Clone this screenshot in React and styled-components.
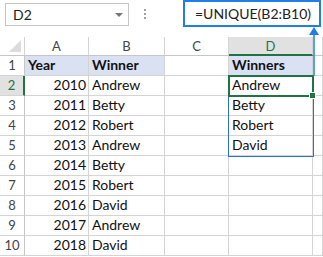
import React from 'react'
import styled, { createGlobalStyle } from 'styled-components'

const GlobalStyle = createGlobalStyle`
  html, body {
    margin: 0;
    padding: 0;
    background: #ffffff;
  }
  body {
    font-family: Lato, 'Open Sans', sans-serif;
  }
`

const Sheet = styled.div`
  position: relative;
  width: 323px;
  height: 257px;
  overflow: hidden;
  background: #ffffff;
`

const TopBar = styled.div`
  display: flex;
  align-items: flex-start;
  height: 27px;
  margin-bottom: 10px;
`

const NameBox = styled.div`
  display: flex;
  align-items: center;
  justify-content: space-between;
  box-sizing: border-box;
  width: 124px;
  height: 23px;
  margin: 3px 0 0 5px;
  padding: 0 5px 0 7px;
  border: 1px solid #c6c6c6;
  font-size: 14px;
  color: #222;
`

const Caret = styled.span`
  width: 0;
  height: 0;
  border-left: 4px solid transparent;
  border-right: 4px solid transparent;
  border-top: 4px solid #777;
`

const Dots = styled.div`
  display: flex;
  flex-direction: column;
  align-items: center;
  gap: 2px;
  width: 32px;
  margin: 9px 0 0 0;
  padding-left: 0;
  & > span {
    width: 2px;
    height: 2px;
    background: #a0a0a0;
  }
`

const FormulaBox = styled.div`
  box-sizing: border-box;
  margin-left: 22px;
  width: 138px;
  height: 27px;
  border: 2px solid #1f7fe6;
  padding-left: 10px;
  display: flex;
  align-items: center;
  font-size: 14px;
  color: #222;
`

const Grid = styled.div`
  display: grid;
  grid-template-columns: 25px 64px 76px 64px 84px 10px;
  grid-template-rows: 19px repeat(10, 20px);
  font-size: 14px;
`

const Corner = styled.div`
  position: relative;
  background: #ffffff;
  border-right: 1px solid #d4d4d4;
  border-bottom: 1px solid #c6c6c6;
  &::after {
    content: '';
    position: absolute;
    right: 3px;
    bottom: 3px;
    width: 0;
    height: 0;
    border-left: 12px solid transparent;
    border-bottom: 12px solid #dcdcdc;
  }
`

const ColHead = styled.div`
  display: flex;
  align-items: center;
  justify-content: center;
  box-sizing: border-box;
  font-size: 13px;
  color: ${p => (p.active ? '#217346' : '#444')};
  background: ${p => (p.active ? '#e1e1e1' : '#ffffff')};
  border-right: 1px solid #d4d4d4;
  border-bottom: ${p => (p.active ? '2px solid #217346' : '1px solid #c6c6c6')};
`

const RowHead = styled.div`
  display: flex;
  align-items: flex-end;
  justify-content: center;
  box-sizing: border-box;
  padding-bottom: 2px;
  font-size: 13px;
  color: ${p => (p.active ? '#217346' : '#444')};
  background: ${p => (p.active ? '#e1e1e1' : '#ffffff')};
  border-right: ${p => (p.active ? '2px solid #217346' : '1px solid #c6c6c6')};
  border-bottom: 1px solid #d4d4d4;
`

const Cell = styled.div`
  display: flex;
  align-items: flex-end;
  justify-content: ${p => (p.num ? 'flex-end' : 'flex-start')};
  box-sizing: border-box;
  padding: 0 2px 2px 3px;
  color: #111;
  font-weight: ${p => (p.bold ? 700 : 400)};
  background: ${p => (p.head ? '#d9e1f2' : '#ffffff')};
  border-right: 1px solid #d4d4d4;
  border-bottom: 1px solid #d4d4d4;
  white-space: nowrap;
  overflow: hidden;
`

const SpillRange = styled.div`
  position: absolute;
  left: 228px;
  top: 75px;
  width: 86px;
  height: 82px;
  box-sizing: border-box;
  border: 1px solid #2a6fd4;
  pointer-events: none;
`

const Selection = styled.div`
  position: absolute;
  left: 228px;
  top: 75px;
  width: 86px;
  height: 22px;
  box-sizing: border-box;
  border: 2px solid #217346;
  &::after {
    content: '';
    position: absolute;
    right: -4px;
    bottom: -4px;
    width: 5px;
    height: 5px;
    background: #217346;
    border: 1px solid #fff;
  }
`

const Arrow = styled.svg`
  position: absolute;
  left: 308px;
  top: 26px;
`

const data = [
  [2010, 'Andrew', 'Andrew'],
  [2011, 'Betty', 'Betty'],
  [2012, 'Robert', 'Robert'],
  [2013, 'Andrew', 'David'],
  [2014, 'Betty', ''],
  [2015, 'Robert', ''],
  [2016, 'David', ''],
  [2017, 'Andrew', ''],
  [2018, 'David', ''],
]

const App = () => {
  return (
    <>
      <GlobalStyle />
      <Sheet>
        <TopBar>
          <NameBox>
            D2
            <Caret />
          </NameBox>
          <Dots>
            <span />
            <span />
            <span />
          </Dots>
          <FormulaBox>=UNIQUE(B2:B10)</FormulaBox>
        </TopBar>
        <Grid>
          <Corner />
          <ColHead>A</ColHead>
          <ColHead>B</ColHead>
          <ColHead>C</ColHead>
          <ColHead active>D</ColHead>
          <ColHead />

          <RowHead>1</RowHead>
          <Cell head bold>Year</Cell>
          <Cell head bold>Winner</Cell>
          <Cell />
          <Cell head bold>Winners</Cell>
          <Cell />

          {data.map((row, i) => (
            <React.Fragment key={i}>
              <RowHead active={i === 0}>{i + 2}</RowHead>
              <Cell num>{row[0]}</Cell>
              <Cell>{row[1]}</Cell>
              <Cell />
              <Cell>{row[2]}</Cell>
              <Cell />
            </React.Fragment>
          ))}
        </Grid>
        <SpillRange />
        <Selection />
        <Arrow width="12" height="50" viewBox="0 0 12 50">
          <line x1="6" y1="6" x2="6" y2="50" stroke="#1f7fe6" strokeWidth="1.5" />
          <polygon points="6,1 11,9 1,9" fill="#1f7fe6" />
        </Arrow>
      </Sheet>
    </>
  )
}

export default App
